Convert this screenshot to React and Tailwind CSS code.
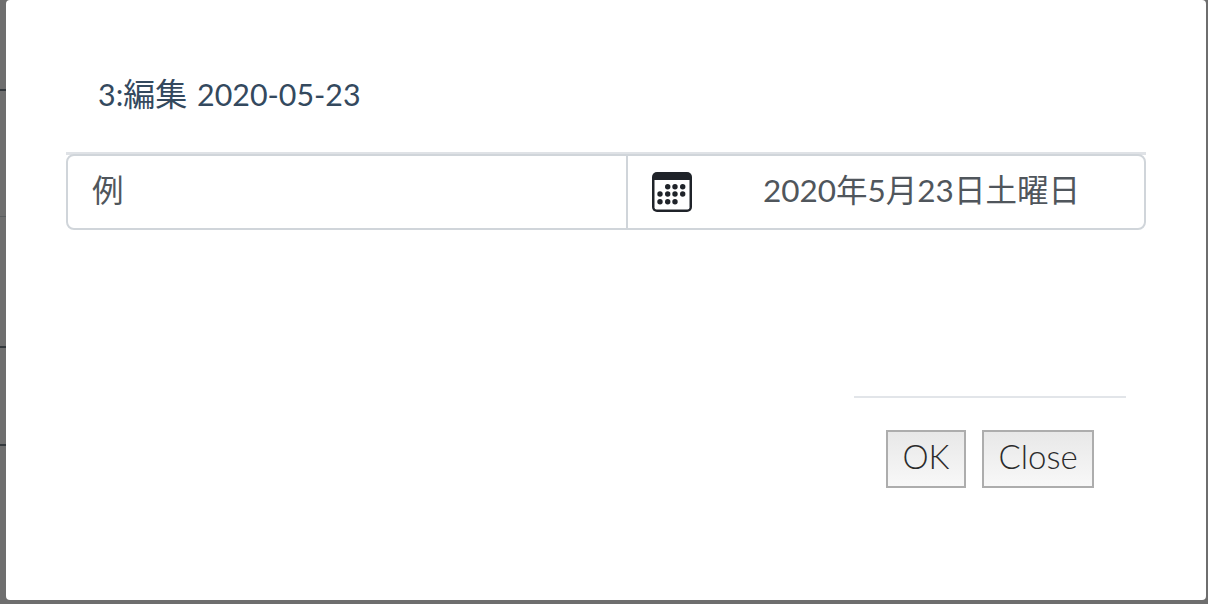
const FONT = "font-['Lato','Noto_Sans_CJK_JP',sans-serif]";

const CalendarIcon = () => (
  <svg width="40" height="40" viewBox="0 0 40 40" className="shrink-0">
    <path d="M5 0h30a5 5 0 0 1 5 5v30a5 5 0 0 1-5 5H5a5 5 0 0 1-5-5V5a5 5 0 0 1 5-5z" fill="#1f2329" />
    <path d="M2.5 8h35v27.5a2 2 0 0 1-2 2h-31a2 2 0 0 1-2-2z" fill="#fff" />
    {[[15.7, 14.7], [23, 14.7], [30.7, 14.7], [8, 22], [15.7, 22], [23, 22], [30.7, 22], [8, 29.7], [15.7, 29.7], [23, 29.7]].map(([cx, cy]) => (
      <circle key={`${cx}-${cy}`} cx={cx} cy={cy} r="2.7" fill="#1f2329" />
    ))}
  </svg>
);

const Backdrop = () => (
  <div className="w-[6px] shrink-0 flex flex-col">
    <div className="h-[89px]" />
    <div className="h-[2px] bg-[#33383c]" />
    <div className="h-[125px]" />
    <div className="h-[1px] bg-[#5a5d5f]" />
    <div className="h-[129px]" />
    <div className="h-[2px] bg-[#33383c]" />
    <div className="h-[96px]" />
    <div className="h-[2px] bg-[#33383c]" />
  </div>
);

const Button = ({ label, width }) => (
  <button className={`${width} h-[58px] pb-[5px] border-2 border-[#adadad] bg-gradient-to-b from-[#e8e8e8] to-[#f8f8f8] text-[33px] font-light text-[#2b2b2b]`}>
    {label}
  </button>
);

export default function App() {
  return (
    <div className={`${FONT} w-[1208px] h-[604px] overflow-hidden flex bg-[#6e6e6e]`}>
      <Backdrop />
      <div className="w-[1200px] h-[600px] bg-white rounded-[4px] flex flex-col px-[60px]">
        <h1 className="pt-[73px] pl-[32px] h-[152px] text-[30.4px] leading-[42px] font-normal text-[#34495e]">
          3:<span className="text-[32px]">編集</span> <span className="ml-[2px]">2020-05-23</span>
        </h1>
        <div className="h-[3px] bg-[#dfe2e6] mb-[-1px]" />
        <div className="w-[1080px] h-[76px] flex border-2 border-[#d0d5da] rounded-[8px] text-[31.5px] text-[#50565c]">
          <div className="w-[560px] pb-[2px] flex items-center pl-[24px] border-r-2 border-[#d0d5da]">例</div>
          <div className="flex-1 flex items-center pl-[24px]">
            <CalendarIcon />
            <span className="ml-[71px] pb-[2px]">2020年5月23日土曜日</span>
          </div>
        </div>
        <div className="mt-[166px] ml-[788px] w-[272px] h-[2px] bg-[#e2e5e9]" />
        <div className="mt-[32px] ml-[820px] flex gap-[16px]">
          <Button label="OK" width="w-[80px]" />
          <Button label="Close" width="w-[112px]" />
        </div>
      </div>
    </div>
  );
}
